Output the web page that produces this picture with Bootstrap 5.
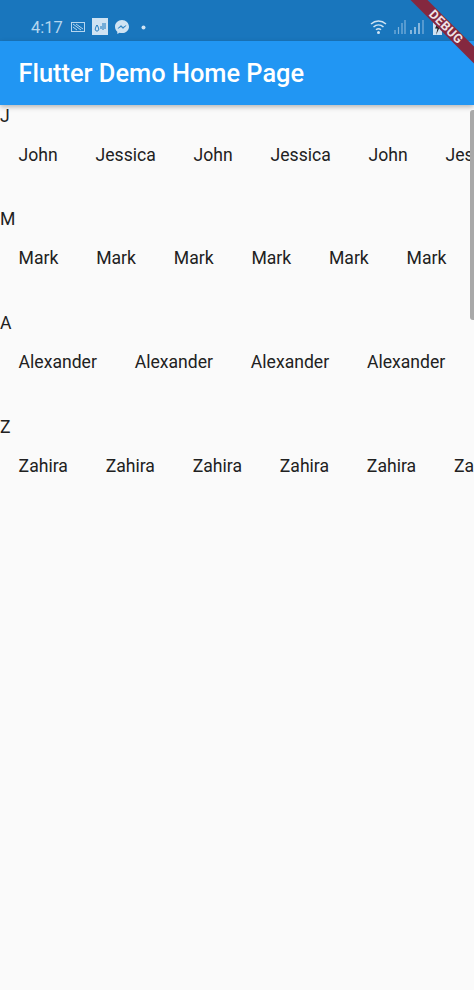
<!DOCTYPE html>
<html lang="en"><head><meta charset="utf-8"><title>Flutter Demo</title>
<link href="https://cdn.jsdelivr.net/npm/bootstrap@5.3.0/dist/css/bootstrap.min.css" rel="stylesheet">
<style>
html,body{height:100%;margin:0}
body{background:#fafafa;font-family:Roboto,sans-serif;color:#212121;overflow:hidden;width:474px;height:990px;position:relative}
.stat{height:41px;background:#1976bd;color:#b5d6ef;padding:0 0 0 31px;font-size:16.500px}
.stat .tm{line-height:1;margin-top:20px;width:36px}
.stat svg{display:block}
.appb{height:64px;background:#2196f3;color:#fff;font-size:25.400px;font-weight:500;padding-left:18.500px;box-shadow:0 2px 5px rgba(0,0,0,.28);position:relative;z-index:1}
.grp{height:103.700px}
.lst{padding-top:.500px}
.hd{font-size:17.600px;line-height:20px;height:20px}
.rw{margin-top:10px;height:39px;white-space:nowrap;overflow:hidden;font-size:17.600px;line-height:39px;display:flex}
.rw span{padding:0 18.900px;flex:none}
.rw span:first-child{padding-left:18.600px}
.sbar{position:absolute;right:0;top:110px;width:4px;height:210px;background:#a9a9a9;border-radius:3px 0 0 3px;z-index:2}
.ban{position:absolute;top:21px;right:-32.500px;width:122px;height:12px;background:#84283f;color:#efe3e6;font-size:12.500px;font-weight:700;line-height:12px;text-align:center;letter-spacing:.4px;transform:rotate(45deg);z-index:3}
</style></head><body>
<div class="stat d-flex align-items-start">
<div class="tm">4:17</div>
<svg class="ms-1" style="margin-top:22px" width="14" height="11" viewBox="0 0 14 11"><rect x=".5" y=".5" width="13" height="9" fill="none" stroke="#b5d6ef"/><path d="M2 2l8 6M5 2l7 5M2 5l4 3" stroke="#b5d6ef"/></svg>
<svg style="margin:18px 0 0 7px" width="16" height="17" viewBox="0 0 16 17"><rect width="16" height="17" fill="#cfe3f3"/><path d="M5 7c-2 3-2.500 6 0 6s2-3 0-6z" fill="none" stroke="#1976bd"/><path d="M9 8v3M11 5v7M13 5v6" stroke="#1976bd"/></svg>
<svg style="margin:20px 0 0 7px" width="14" height="14" viewBox="0 0 14 14"><path d="M7 0C3 0 0 3 0 6.700c0 2 .9 3.800 2.300 5V14l2.200-1.200c.8.200 1.600.3 2.500.3 4 0 7-2.900 7-6.400S11 0 7 0z" fill="#cfe3f3"/><path d="M3 8.500l3-3 2 2 3-2-3 3-2-2z" fill="#1976bd" stroke="#1976bd" stroke-width=".5"/></svg>
<svg style="margin:25px 0 0 12px" width="5" height="5"><circle cx="2.500" cy="2.500" r="2" fill="#cfe3f3"/></svg>
<div class="ms-auto d-flex" style="margin-right:32px;margin-top:19px">
<svg width="18" height="16" viewBox="0 0 18 16"><path d="M1 5c4.500-4 10.500-4 15 0M3.500 8c3-2.700 7-2.700 10 0M6 10.800c1.500-1.300 3.500-1.300 5 0" fill="none" stroke="#cfe3f3" stroke-width="1.500"/><circle cx="8.500" cy="13.500" r="1.500" fill="#cfe3f3"/></svg>
<svg style="margin-left:6px" width="12" height="15" viewBox="0 0 12 15"><path d="M1 11v4M4.500 8v7M8 4v11M11 1v14" stroke="#7fb3dc" stroke-width="1.200"/></svg>
<svg style="margin-left:4px" width="14" height="15" viewBox="0 0 14 15"><path d="M1 11v4M5 8v7" stroke="#cfe3f3" stroke-width="1.200"/><path d="M9 4v11" stroke="#cfe3f3" stroke-width="1.200"/><path d="M13 1v14" stroke="#7fb3dc" stroke-width="1.200"/></svg>
<svg style="margin:2px 0 0 9px" width="9" height="14" viewBox="0 0 9 14"><rect width="9" height="14" fill="#cfe3f3"/><path d="M5.500 0L2 7.500h2.500L3 14l4-8.500H4.500z" fill="#222"/></svg>
</div></div>
<div class="appb d-flex align-items-center">Flutter Demo Home Page</div>
<div class="lst">
<div class="grp"><div class="hd">J</div><div class="rw"><span>John</span><span>Jessica</span><span>John</span><span>Jessica</span><span>John</span><span>Jessica</span></div></div>
<div class="grp"><div class="hd">M</div><div class="rw"><span>Mark</span><span>Mark</span><span>Mark</span><span>Mark</span><span>Mark</span><span>Mark</span><span>Mark</span></div></div>
<div class="grp"><div class="hd">A</div><div class="rw"><span>Alexander</span><span>Alexander</span><span>Alexander</span><span>Alexander</span><span>Alexander</span></div></div>
<div class="grp"><div class="hd">Z</div><div class="rw"><span>Zahira</span><span>Zahira</span><span>Zahira</span><span>Zahira</span><span>Zahira</span><span>Zahira</span></div></div>
</div>
<div class="sbar"></div>
<div class="ban">DEBUG</div>
<script src="https://cdn.jsdelivr.net/npm/bootstrap@5.3.0/dist/js/bootstrap.bundle.min.js"></script>
</body></html>
